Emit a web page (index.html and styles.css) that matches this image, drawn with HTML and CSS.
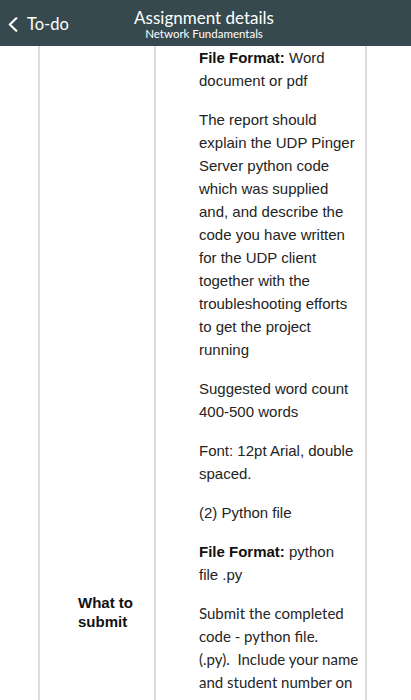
FILE: index.html
```html
<!DOCTYPE html>
<html lang="en">
<head>
<meta charset="utf-8">
<title>Assignment details</title>
<link rel="stylesheet" href="styles.css">
</head>
<body>
<header class="topbar">
  <a class="back" href="#">
    <svg viewBox="0 0 10 15" aria-hidden="true"><path d="M8.3 1.3 L1.8 7.5 L8.3 13.7" /></svg>
    <span>To-do</span>
  </a>
  <div class="title">
    <h1>Assignment details</h1>
    <p>Network Fundamentals</p>
  </div>
  <div></div>
</header>
<main class="table">
  <div class="row">
    <div class="label-cell"></div>
    <div class="content-cell">
      <p><strong>File Format:</strong> Word document or pdf</p>
      <p>The report should explain the UDP Pinger Server python code which was supplied and, and describe the code you have written for the UDP client together with the troubleshooting efforts to get the project running</p>
      <p>Suggested word count 400-500 words</p>
      <p>Font: 12pt Arial, double spaced.</p>
      <p>(2) Python file</p>
      <p><strong>File Format:</strong> python file .py</p>
    </div>
  </div>
  <div class="row">
    <div class="label-cell"><strong class="label">What to submit</strong></div>
    <div class="content-cell">
      <p class="lato">Submit the completed code - python file.<br>(.py).&nbsp; Include your name and student number on</p>
    </div>
  </div>
</main>
</body>
</html>
```
FILE: styles.css
```css
body {
  margin: 0;
  background: #ffffff;
  font-family: "Liberation Sans", Arial, sans-serif;
  color: #242424;
}

.topbar {
  height: 46px;
  background: #36494e;
  color: #ffffff;
  display: grid;
  grid-template-columns: 1fr auto 1fr;
  font-family: Lato, "Open Sans", sans-serif;
}

.back {
  display: flex;
  align-items: center;
  gap: 9px;
  align-self: start;
  padding: 14px 0 0 8px;
  font-size: 16.5px;
  line-height: 20px;
  color: #ffffff;
  text-decoration: none;
}

.back svg {
  width: 10px;
  height: 15px;
}

.back path {
  fill: none;
  stroke: #ffffff;
  stroke-width: 2.2;
  stroke-linecap: round;
  stroke-linejoin: round;
}

.title {
  text-align: center;
  padding-top: 8px;
  padding-right: 3px;
}

.title h1 {
  margin: 0;
  font-size: 17px;
  font-weight: 400;
  line-height: 20px;
}

.title p {
  margin: 0;
  font-size: 11.5px;
  line-height: 12px;
}

.table {
  margin-left: 38px;
  width: 329px;
}

.row {
  display: grid;
  grid-template-columns: 118px 211px;
}

.label-cell {
  border-left: 2px solid #dcdcdc;
  border-right: 2px solid #dcdcdc;
  padding-left: 38px;
}

.content-cell {
  border-right: 2px solid #dcdcdc;
  padding: 0 9px 0 43px;
}

.content-cell p {
  margin: 0 0 16px;
  font-size: 15px;
  line-height: 23px;
}

.content-cell strong {
  color: #111111;
}

.row:first-child .content-cell p:last-child {
  margin-bottom: 0;
}

.row:last-child .content-cell {
  padding-bottom: 40px;
}

.content-cell p.lato {
  font-family: Lato, sans-serif;
  margin: 16px -8px 0 0;
  color: #262626;
}

.label {
  display: block;
  padding-top: 7px;
  font-weight: 700;
  font-size: 15px;
  line-height: 19px;
  color: #111111;
}
```
